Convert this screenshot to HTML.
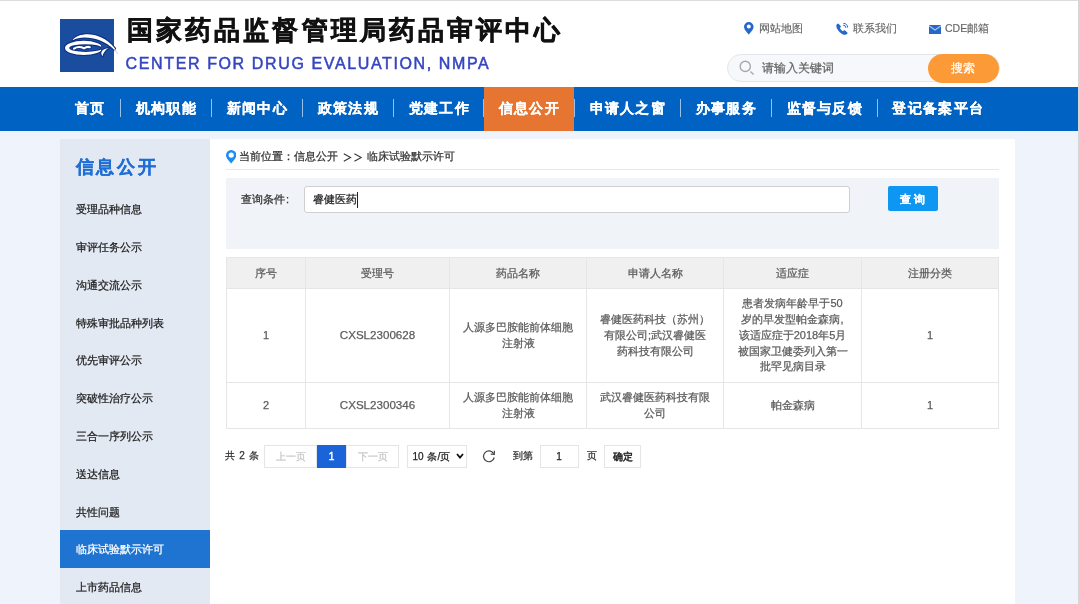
<!DOCTYPE html>
<html><head><meta charset="utf-8">
<style>
*{margin:0;padding:0;box-sizing:border-box}
html,body{width:1080px;height:604px;overflow:hidden;background:#fff;font-family:"Liberation Sans",sans-serif;color:#333}
.abs{position:absolute}
#topb{left:0;top:0;width:1080px;height:1px;background:#dcdcdc;z-index:9}
#rightb{left:1078px;top:0;width:2px;height:604px;background:#d6d6d6;z-index:9}
#logo{left:60px;top:19px;width:54px;height:53px;overflow:visible}
#title{left:127px;top:14px;font-size:26px;font-weight:bold;letter-spacing:3.1px;line-height:32px;color:#111;-webkit-text-stroke:0.55px #111;white-space:nowrap}
#etitle{left:125.6px;top:54.6px;font-size:16px;letter-spacing:1.62px;line-height:18px;color:#3545c0;-webkit-text-stroke:0.5px #3545c0;white-space:nowrap}
.tl{top:21px;font-size:10.5px;line-height:14px;color:#666;-webkit-text-stroke-width:0.15px;white-space:nowrap}
#search{left:726.5px;top:54px;width:273px;height:28px;border:1px solid #e3e6ea;border-radius:14px;background:#f7f8fc}
#sbtn{left:927.5px;top:53.5px;width:71.5px;height:29px;border-radius:14.5px;background:#fd9a38;color:#fff;font-size:12px;line-height:28px;text-align:center}
#ph{left:762px;top:60px;font-size:12px;line-height:16px;color:#666}
#nav{left:0;top:87px;width:1078px;height:44px;background:#0062c2}
#nav .it{position:absolute;top:0;height:44px;line-height:42px;color:#fff;-webkit-text-stroke:0.2px #fff;font-size:14px;letter-spacing:1.3px;padding-left:0.5px;font-weight:bold;text-align:center;white-space:nowrap}
#nav .sep{position:absolute;top:12px;width:1px;height:18px;background:rgba(255,255,255,.6)}
#pagebg{left:0;top:131px;width:1078px;height:473px;background:#eff4fc}
#side{left:60px;top:139px;width:150px;height:465px;background:#e3e9f3}
#stitle{left:75.5px;top:154px;font-size:18px;font-weight:bold;letter-spacing:2.8px;line-height:26px;color:#1f6ed5}
.si{position:absolute;left:60px;width:150px;height:37.8px;line-height:39.2px;padding-left:16px;font-size:10.8px;color:#222;white-space:nowrap}
.si.on{background:#1e74d0;color:#fff}
#content{left:210px;top:139px;width:805px;height:465px;background:#fff}
#crumb{left:239.3px;top:149px;font-size:11px;line-height:14px;color:#333;white-space:nowrap}
#qlabel{left:241px;top:192px;font-size:11px;line-height:14px;color:#333}
#qinput{left:303.8px;top:186.2px;width:546.6px;height:26.8px;border:1px solid #cfcfcf;border-radius:3px;background:#fff;padding-left:8.5px;font-size:11px;line-height:24.8px;color:#222}
.caret{display:inline-block;width:1px;height:15.5px;background:#222;vertical-align:middle;margin-top:-1px}
#qbtn{left:887.5px;top:186px;width:50.5px;height:25px;background:#0d96f2;border-radius:2px;color:#fff;font-size:10.5px;font-weight:bold;line-height:27px;text-align:center;letter-spacing:0.5px}
#tbl{left:226px;top:257px;border-collapse:collapse;table-layout:fixed;width:772px}
#tbl td{border:1px solid #e6e6e6;text-align:center;vertical-align:middle;font-size:11px;line-height:15.7px;color:#5c5c5c;padding:0}
#tbl tr.hd td{background:#f0f0f0;height:31.4px;padding-top:1px}
.cx{font-size:11.6px}
.pg{font-size:10px;line-height:14px;color:#333;white-space:nowrap}
.pbox{top:445px;height:23px;border:1px solid #e5e5e5;background:#fff;font-size:10px;line-height:21px;text-align:center;white-space:nowrap}
</style></head><body>
<div id="wrap" style="position:absolute;left:0;top:0;width:1080px;height:604px;overflow:hidden;background:#fff;will-change:transform;-webkit-text-stroke-width:0.25px">
<div id="topb" class="abs"></div>
<div id="rightb" class="abs"></div>

<svg id="logo" class="abs" viewBox="0 0 54 53">
<defs><clipPath id="cl"><rect x="0" y="0" width="41" height="53"/></clipPath>
<g id="shp">
<path d="M12.8 20.6 C19 13.5 40 11 55 29.5 L54 30.5 C41 18 22 16 12.8 21.2Z"/>
<path clip-path="url(#cl)" fill-rule="evenodd" d="M5 28.9 A18.7 7.1 0 1 0 42.4 28.9 A18.7 7.1 0 1 0 5 28.9Z M9.2 29.1 A16.4 3.9 0 1 0 42 29.1 A16.4 3.9 0 1 0 9.2 29.1Z"/>
<path d="M48.6 29 C43 29.8, 39.2 33, 42.6 37.2 C43 34.5, 44.8 31.2, 48.6 29Z"/>
</g></defs>
<rect width="54" height="53" fill="#1b4d9e"/>
<g fill="#0c2f82" stroke="#0c2f82" stroke-width="2.2" stroke-linejoin="round"><use href="#shp"/></g>
<path d="M14 29.6 C17 27.6 21 27.8 24 29.3 C26 28 28 27.6 29.8 28.2" stroke="#0c2f82" stroke-width="4" fill="none" stroke-linecap="round"/>
<path d="M53.5 28.5 C55 30 56.5 32 58 34.5 L57.2 35 C56 33 54.8 31.2 53.5 30Z" fill="#b9cbe8"/>
<g fill="#fff"><use href="#shp"/></g>
<path d="M14 29.6 C17 27.6 21 27.8 24 29.3 C26 28 28 27.6 29.8 28.2" stroke="#fff" stroke-width="2.1" fill="none" stroke-linecap="round"/>
</svg>

<div id="title" class="abs">国家药品监督管理局药品审评中心</div>
<div id="etitle" class="abs">CENTER FOR DRUG EVALUATION, NMPA</div>

<svg class="abs" style="left:744px;top:22px" width="9.6" height="12.7" viewBox="0 0 9.6 12.7"><path fill-rule="evenodd" d="M4.8 12.7 C3.3 10.6 0 7.8 0 4.8 A4.8 4.8 0 0 1 9.6 4.8 C9.6 7.8 6.3 10.6 4.8 12.7Z M4.8 2.6 A2 2 0 1 0 4.8 6.6 A2 2 0 1 0 4.8 2.6Z" fill="#2568c9"/></svg>
<div class="abs tl" style="left:759px">网站地图</div>
<svg class="abs" style="left:836px;top:22.5px" width="12" height="12" viewBox="0 0 12 12"><path d="M2.3 0.6 C1.4 0.9 0.2 1.8 0.3 3.3 C0.6 5.8 3.4 10 7.6 11.7 C9.1 12.2 10.6 11.5 11.4 10.4 L11.6 9.7 L9.1 7.5 C8.6 7.1 8 7.2 7.6 7.6 L7.1 8.2 C5.6 7.4 4.6 6.3 3.9 4.9 L4.5 4.3 C4.9 3.9 5 3.3 4.7 2.9 Z" fill="#2568c9"/><path d="M7.2 2.2 A2.6 2.6 0 0 1 9.8 4.8 M7.4 0.4 A4.3 4.3 0 0 1 11.6 4.6" stroke="#2568c9" stroke-width="1" fill="none"/></svg>
<div class="abs tl" style="left:852.5px">联系我们</div>
<svg class="abs" style="left:929px;top:25px" width="12" height="9" viewBox="0 0 12 9"><path d="M0 0H12V9H0Z" fill="#2568c9"/><path d="M0 0.8L6 5L12 0.8" stroke="#a9c6ef" stroke-width="1.1" fill="none"/></svg>
<div class="abs tl" style="left:945px">CDE邮箱</div>

<div id="search" class="abs"></div>
<svg class="abs" style="left:739px;top:60px" width="16" height="16" viewBox="0 0 16 16"><circle cx="6.3" cy="6.4" r="5.1" stroke="#a8a8a8" stroke-width="1.4" fill="none"/><path d="M11.4 11.6 L14.6 14.6" stroke="#a8a8a8" stroke-width="1.4"/></svg>
<div id="ph" class="abs">请输入关键词</div>
<div id="sbtn" class="abs">搜索</div>

<div id="nav" class="abs">
<div class="it" style="left:60px;width:60px">首页</div><div class="sep" style="left:120px"></div>
<div class="it" style="left:121px;width:90px">机构职能</div><div class="sep" style="left:211px"></div>
<div class="it" style="left:212px;width:90px">新闻中心</div><div class="sep" style="left:302px"></div>
<div class="it" style="left:303px;width:90px">政策法规</div><div class="sep" style="left:393px"></div>
<div class="it" style="left:394px;width:90px">党建工作</div><div class="it" style="left:484px;width:90px;background:#e67532">信息公开</div><div class="sep" style="left:483px"></div><div class="sep" style="left:573.5px"></div>
<div class="it" style="left:575px;width:105px">申请人之窗</div><div class="sep" style="left:680px"></div>
<div class="it" style="left:681px;width:90px">办事服务</div><div class="sep" style="left:771px"></div>
<div class="it" style="left:772px;width:105px">监督与反馈</div><div class="sep" style="left:877px"></div>
<div class="it" style="left:878px;width:120px">登记备案平台</div>
</div>

<div id="pagebg" class="abs"></div>
<div id="side" class="abs"></div>
<div id="stitle" class="abs">信息公开</div>
<div class="si" style="top:190.2px">受理品种信息</div>
<div class="si" style="top:228px">审评任务公示</div>
<div class="si" style="top:265.8px">沟通交流公示</div>
<div class="si" style="top:303.6px">特殊审批品种列表</div>
<div class="si" style="top:341.4px">优先审评公示</div>
<div class="si" style="top:379.2px">突破性治疗公示</div>
<div class="si" style="top:417px">三合一序列公示</div>
<div class="si" style="top:454.8px">送达信息</div>
<div class="si" style="top:492.6px">共性问题</div>
<div class="si on" style="top:530.4px">临床试验默示许可</div>
<div class="si" style="top:568.2px">上市药品信息</div>

<div id="content" class="abs"></div>
<svg class="abs" style="left:225.6px;top:150.4px" width="10.4" height="13.5" viewBox="0 0 10.4 13.5"><path fill-rule="evenodd" d="M5.2 13.5 C3.6 11.2 0 8.3 0 5.2 A5.2 5.2 0 0 1 10.4 5.2 C10.4 8.3 6.8 11.2 5.2 13.5Z M5.2 2.5 A2.6 2.6 0 1 0 5.2 7.7 A2.6 2.6 0 1 0 5.2 2.5Z" fill="#1a8cf4"/></svg>
<div id="crumb" class="abs">当前位置：信息公开</div>
<svg class="abs" style="left:342.5px;top:153px" width="20" height="9" viewBox="0 0 20 9"><path d="M0.8 0.8L7.6 4.5L0.8 8.2M11.4 0.8L18.2 4.5L11.4 8.2" stroke="#333" stroke-width="1.05" fill="none"/></svg>
<div class="abs" style="left:367.2px;top:149px;font-size:11px;line-height:14px;color:#333;white-space:nowrap">临床试验默示许可</div>
<div class="abs" style="left:225.5px;top:169px;width:773px;height:1px;background:#e8e8e8"></div>
<div class="abs" style="left:225.5px;top:178px;width:773px;height:71px;background:#f0f3f7"></div>
<div id="qlabel" class="abs">查询条件<span style="margin-left:1px">:</span></div>
<div id="qinput" class="abs">睿健医药<span class="caret"></span></div>
<div id="qbtn" class="abs">查 询</div>

<table id="tbl" class="abs">
<colgroup><col style="width:79px"><col style="width:144px"><col style="width:137px"><col style="width:137px"><col style="width:138px"><col style="width:137px"></colgroup>
<tr class="hd"><td>序号</td><td>受理号</td><td>药品名称</td><td>申请人名称</td><td>适应症</td><td>注册分类</td></tr>
<tr style="height:93.6px"><td>1</td><td><span class="cx">CXSL2300628</span></td><td>人源多巴胺能前体细胞<br>注射液</td><td>睿健医药科技（苏州）<br>有限公司;武汉睿健医<br>药科技有限公司</td><td>患者发病年龄早于50<br>岁的早发型帕金森病,<br>该适应症于2018年5月<br>被国家卫健委列入第一<br>批罕见病目录</td><td>1</td></tr>
<tr style="height:46.3px"><td>2</td><td><span class="cx">CXSL2300346</span></td><td>人源多巴胺能前体细胞<br>注射液</td><td>武汉睿健医药科技有限<br>公司</td><td>帕金森病</td><td>1</td></tr>
</table>

<div class="abs pg" style="left:225px;top:449px;word-spacing:1.5px">共 2 条</div>
<div class="abs pbox" style="left:264px;width:53px;color:#c8c8c8">上一页</div>
<div class="abs pbox" style="left:317px;width:29px;background:#1a63d8;border-color:#1a63d8;color:#fff;-webkit-text-stroke-width:0.45px">1</div>
<div class="abs pbox" style="left:346px;width:53px;color:#c8c8c8">下一页</div>
<div class="abs pbox" style="left:406.5px;width:60px;color:#222;text-align:left;padding-left:5px;word-spacing:1px">10 条/页</div>
<svg class="abs" style="left:456px;top:453px" width="8" height="6" viewBox="0 0 8 6"><path d="M1 1L4 4.5L7 1" stroke="#111" stroke-width="1.8" fill="none"/></svg>
<svg class="abs" style="left:481.6px;top:449.5px" width="14" height="13" viewBox="0 0 14 13"><path d="M11.6 3.6 A5.4 5.4 0 1 0 12.2 7.5" stroke="#444" stroke-width="1.2" fill="none"/><path d="M12.4 0.8 L12.3 4.4 L8.8 4.2" stroke="#444" stroke-width="1.2" fill="none"/></svg>
<div class="abs pg" style="left:512.5px;top:449px">到第</div>
<div class="abs pbox" style="left:539.5px;width:39px;color:#222">1</div>
<div class="abs pg" style="left:586.5px;top:449px">页</div>
<div class="abs pbox" style="left:604px;width:37px;color:#222;-webkit-text-stroke-width:0.45px">确定</div>

</div>
</body></html>
